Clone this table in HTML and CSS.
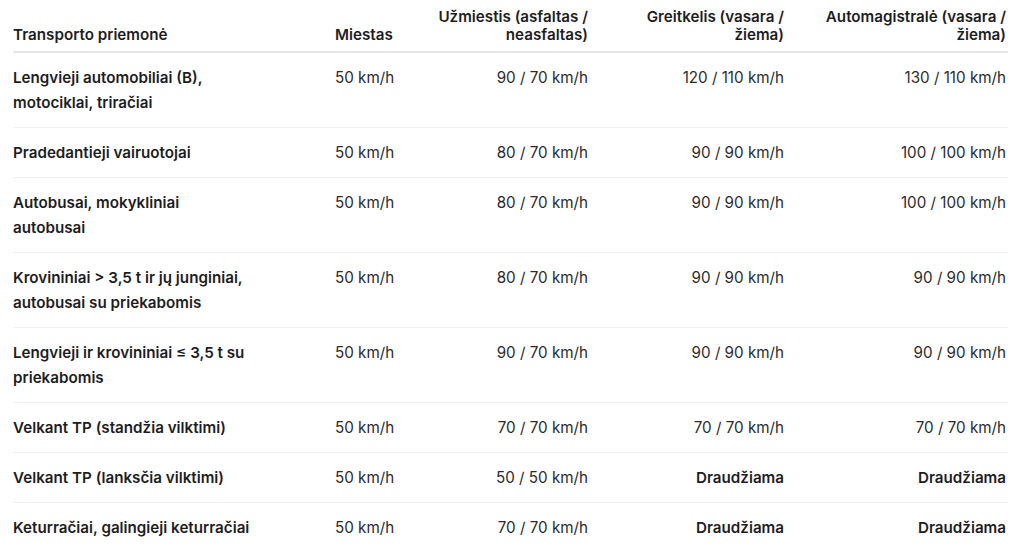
FILE: index.html
```html
<!DOCTYPE html>
<html lang="lt">
<head>
<meta charset="utf-8">
<title>Greičio apribojimai</title>
<link rel="stylesheet" href="styles.css">
</head>
<body>
<table class="speed-table">
  <colgroup>
    <col class="c-name">
    <col class="c-city">
    <col class="c-rural">
    <col class="c-express">
    <col class="c-motorway">
  </colgroup>
  <thead>
    <tr>
      <th class="name">Transporto priemonė</th>
      <th class="city">Miestas</th>
      <th class="num">Užmiestis (asfaltas / neasfaltas)</th>
      <th class="num">Greitkelis (vasara / žiema)</th>
      <th class="num last">Automagistralė (vasara / žiema)</th>
    </tr>
  </thead>
  <tbody>
    <tr>
      <td class="name">Lengvieji automobiliai (B), motociklai, triračiai</td>
      <td class="city">50 km/h</td>
      <td class="num">90 / 70 km/h</td>
      <td class="num">120 / 110 km/h</td>
      <td class="num last">130 / 110 km/h</td>
    </tr>
    <tr>
      <td class="name">Pradedantieji vairuotojai</td>
      <td class="city">50 km/h</td>
      <td class="num">80 / 70 km/h</td>
      <td class="num">90 / 90 km/h</td>
      <td class="num last">100 / 100 km/h</td>
    </tr>
    <tr>
      <td class="name">Autobusai, mokykliniai autobusai</td>
      <td class="city">50 km/h</td>
      <td class="num">80 / 70 km/h</td>
      <td class="num">90 / 90 km/h</td>
      <td class="num last">100 / 100 km/h</td>
    </tr>
    <tr>
      <td class="name">Krovininiai &gt; 3,5 t ir jų junginiai, autobusai su priekabomis</td>
      <td class="city">50 km/h</td>
      <td class="num">80 / 70 km/h</td>
      <td class="num">90 / 90 km/h</td>
      <td class="num last">90 / 90 km/h</td>
    </tr>
    <tr>
      <td class="name">Lengvieji ir krovininiai ≤ 3,5 t su priekabomis</td>
      <td class="city">50 km/h</td>
      <td class="num">90 / 70 km/h</td>
      <td class="num">90 / 90 km/h</td>
      <td class="num last">90 / 90 km/h</td>
    </tr>
    <tr>
      <td class="name">Velkant TP (standžia vilktimi)</td>
      <td class="city">50 km/h</td>
      <td class="num">70 / 70 km/h</td>
      <td class="num">70 / 70 km/h</td>
      <td class="num last">70 / 70 km/h</td>
    </tr>
    <tr>
      <td class="name">Velkant TP (lanksčia vilktimi)</td>
      <td class="city">50 km/h</td>
      <td class="num">50 / 50 km/h</td>
      <td class="num strong">Draudžiama</td>
      <td class="num last strong">Draudžiama</td>
    </tr>
    <tr>
      <td class="name">Keturračiai, galingieji keturračiai</td>
      <td class="city">50 km/h</td>
      <td class="num">70 / 70 km/h</td>
      <td class="num strong">Draudžiama</td>
      <td class="num last strong">Draudžiama</td>
    </tr>
  </tbody>
</table>
</body>
</html>
```

FILE: styles.css
```css
html, body {
  margin: 0;
  padding: 0;
  background: #ffffff;
}

body {
  padding: 0 16px 0 13px;
  font-family: Inter, "Noto Sans", "Liberation Sans", sans-serif;
  font-size: 15.2px;
  color: #1d1d1f;
}

.speed-table {
  width: 995px;
  border-collapse: collapse;
  table-layout: fixed;
}

.c-name { width: 322px; }
.c-city { width: 80px; }
.c-rural { width: 173px; }
.c-express { width: 196px; }
.c-motorway { width: 224px; }

.speed-table th {
  font-weight: 600;
  line-height: 18px;
  padding: 8px 0 7px 16px;
  vertical-align: bottom;
  border-bottom: 2px solid #e6e6e8;
  color: #1d1d1f;
}

.speed-table td {
  line-height: 25px;
  padding: 12px 0 12px 16px;
  vertical-align: top;
  border-bottom: 1px solid #f1f1f3;
  color: #2b2b2d;
  font-weight: 400;
}

.speed-table .name {
  text-align: left;
  padding-left: 0;
  padding-right: 83px;
  font-weight: 600;
  color: #1d1d1f;
}

.speed-table .city {
  text-align: left;
  padding-left: 0;
}

.speed-table .num {
  text-align: right;
}

.speed-table .last {
  padding-right: 2px;
}

.speed-table .strong {
  font-weight: 600;
  color: #1d1d1f;
}
```
